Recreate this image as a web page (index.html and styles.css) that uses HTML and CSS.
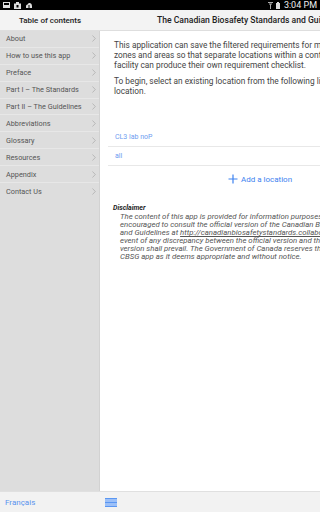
FILE: index.html
```html
<!DOCTYPE html>
<html>
<head>
<meta charset="utf-8">
<link rel="stylesheet" href="styles.css">
</head>
<body>
<div class="screen">
  <div class="status">
    <div class="status-left">
      <svg width="7" height="6" viewBox="0 0 7 6"><rect x="0.5" y="0.5" width="6" height="5" fill="none" stroke="#ddd" stroke-width="1"/><rect x="1" y="3" width="5" height="2" fill="#ddd"/></svg>
      <svg width="7" height="7" viewBox="0 0 7 7"><rect x="0" y="1.5" width="7" height="5.5" fill="#ddd"/><rect x="2" y="0" width="3" height="2" fill="#ddd"/><rect x="2.5" y="3" width="2" height="2.5" fill="#000"/></svg>
      <svg width="8" height="6" viewBox="0 0 8 6"><path d="M1 6 L1 4 Q1 2.5 2.5 2.5 Q3 0.5 5 1 Q7 1.5 7 4 L7 6 Z" fill="#ddd"/><rect x="3.5" y="3" width="1" height="3" fill="#000"/></svg>
    </div>
    <div class="status-right">
      <svg width="5" height="7" viewBox="0 0 5 7"><path d="M0 0.5 H5 M1 2 H4 M2.5 2 V7" stroke="#aaa" stroke-width="1" fill="none"/></svg>
      <svg width="4" height="7" viewBox="0 0 4 7"><rect x="1" y="0" width="2" height="1" fill="#ddd"/><rect x="0" y="1" width="4" height="6" fill="#ddd"/></svg>
      <span class="clock">3:04 PM</span>
    </div>
  </div>

  <div class="header">
    <div class="header-left">Table of contents</div>
    <div class="header-right">The Canadian Biosafety Standards and Guidelines</div>
  </div>

  <div class="main">
    <nav class="sidebar">
      <div class="item"><span>About</span><svg class="chev" width="4" height="7" viewBox="0 0 4 7"><path d="M0.5 0.5 L3.3 3.5 L0.5 6.5" fill="none" stroke="#b3b3b3" stroke-width="0.9"/></svg></div>
      <div class="item"><span>How to use this app</span><svg class="chev" width="4" height="7" viewBox="0 0 4 7"><path d="M0.5 0.5 L3.3 3.5 L0.5 6.5" fill="none" stroke="#b3b3b3" stroke-width="0.9"/></svg></div>
      <div class="item"><span>Preface</span><svg class="chev" width="4" height="7" viewBox="0 0 4 7"><path d="M0.5 0.5 L3.3 3.5 L0.5 6.5" fill="none" stroke="#b3b3b3" stroke-width="0.9"/></svg></div>
      <div class="item"><span>Part I – The Standards</span><svg class="chev" width="4" height="7" viewBox="0 0 4 7"><path d="M0.5 0.5 L3.3 3.5 L0.5 6.5" fill="none" stroke="#b3b3b3" stroke-width="0.9"/></svg></div>
      <div class="item"><span>Part II – The Guidelines</span><svg class="chev" width="4" height="7" viewBox="0 0 4 7"><path d="M0.5 0.5 L3.3 3.5 L0.5 6.5" fill="none" stroke="#b3b3b3" stroke-width="0.9"/></svg></div>
      <div class="item"><span>Abbreviations</span><svg class="chev" width="4" height="7" viewBox="0 0 4 7"><path d="M0.5 0.5 L3.3 3.5 L0.5 6.5" fill="none" stroke="#b3b3b3" stroke-width="0.9"/></svg></div>
      <div class="item"><span>Glossary</span><svg class="chev" width="4" height="7" viewBox="0 0 4 7"><path d="M0.5 0.5 L3.3 3.5 L0.5 6.5" fill="none" stroke="#b3b3b3" stroke-width="0.9"/></svg></div>
      <div class="item"><span>Resources</span><svg class="chev" width="4" height="7" viewBox="0 0 4 7"><path d="M0.5 0.5 L3.3 3.5 L0.5 6.5" fill="none" stroke="#b3b3b3" stroke-width="0.9"/></svg></div>
      <div class="item"><span>Appendix</span><svg class="chev" width="4" height="7" viewBox="0 0 4 7"><path d="M0.5 0.5 L3.3 3.5 L0.5 6.5" fill="none" stroke="#b3b3b3" stroke-width="0.9"/></svg></div>
      <div class="item"><span>Contact Us</span><svg class="chev" width="4" height="7" viewBox="0 0 4 7"><path d="M0.5 0.5 L3.3 3.5 L0.5 6.5" fill="none" stroke="#b3b3b3" stroke-width="0.9"/></svg></div>
    </nav>
    <section class="content">
      <div class="inner">
        <p class="intro">This application can save the filtered requirements for multiple<br>zones and areas so that separate locations within a containment<br>facility can produce their own requirement checklist.</p>
        <p class="intro">To begin, select an existing location from the following list or add a new<br>location.</p>

        <ul class="locations">
          <li>CL3 lab noP</li>
          <li>all</li>
        </ul>

        <div class="add-row">
          <span class="add">
            <svg width="10" height="10" viewBox="0 0 10 10"><path d="M5 0.5 V9.5 M0.5 5 H9.5" stroke="#3c82f0" stroke-width="1.2" fill="none"/></svg>
            Add a location
          </span>
        </div>

        <div class="disclaimer">
          <div class="disc-title">Disclaimer</div>
          <p class="disc-text">The content of this app is provided for information purposes only. Users are<br>encouraged to consult the official version of the Canadian Biosafety Standards<br>and Guidelines at <u>http://canadianbiosafetystandards.collaboration.gc.ca</u>. In the<br>event of any discrepancy between the official version and the app, the official<br>version shall prevail. The Government of Canada reserves the right to modify the<br>CBSG app as it deems appropriate and without notice.</p>
        </div>
      </div>
    </section>
  </div>

  <div class="footer">
    <div class="footer-left">Français</div>
    <div class="footer-right">
      <svg width="12" height="9" viewBox="0 0 12 9"><rect x="0" y="0" width="12" height="9" fill="#9cc0f8"/><rect x="0" y="0" width="12" height="1" fill="#5b97f2"/><rect x="0" y="4" width="12" height="1" fill="#5b97f2"/><rect x="0" y="8" width="12" height="1" fill="#5b97f2"/></svg>
    </div>
  </div>
</div>
</body>
</html>
```

FILE: styles.css
```css
* { box-sizing: border-box; }
html, body {
  margin: 0;
  padding: 0;
  width: 320px;
  height: 512px;
  overflow: hidden;
  font-family: Roboto, "Liberation Sans", sans-serif;
}
.screen {
  width: 320px;
  height: 512px;
  display: flex;
  flex-direction: column;
  background: #fff;
}
.status {
  height: 10px;
  background: #000;
  display: flex;
  justify-content: space-between;
  align-items: center;
  padding: 0 3px;
  flex: none;
}
.status-left, .status-right {
  display: flex;
  align-items: center;
  gap: 4px;
}
.status-right { gap: 3px; }
.clock {
  color: #eee;
  font-size: 9px;
  line-height: 10px;
  margin-left: 1px;
}
.header {
  height: 21px;
  flex: none;
  background: #f3f3f3;
  border-bottom: 1px solid #dedede;
  display: flex;
  align-items: center;
  font-size: 8px;
  font-weight: 500;
  color: #222;
}
.header-left {
  width: 100px;
  text-align: center;
  flex: none;
}
.header-right {
  flex: 1;
  white-space: nowrap;
  overflow: hidden;
  padding-left: 57px;
  font-size: 8.6px;
}
.main {
  flex: 1;
  display: flex;
  min-height: 0;
}
.sidebar {
  width: 100px;
  flex: none;
  background: #dddddd;
  border-right: 1px solid #d2d2d2;
}
.item {
  height: 16.9px;
  display: flex;
  align-items: center;
  justify-content: space-between;
  padding: 0 3px 0 6px;
  font-size: 7.3px;
  color: #555;
  border-bottom: 1px solid #e7e7e7;
}
.item:last-child { border-bottom: none; }
.chev { flex: none; }
.content {
  flex: 1;
  overflow: hidden;
  background: #fff;
}
.inner {
  width: 330px;
  padding-top: 9px;
}
.intro {
  margin: 0 0 6px 14px;
  font-size: 8.3px;
  line-height: 10px;
  color: #444;
  white-space: nowrap;
}
.locations {
  list-style: none;
  margin: 32px 0 0 8px;
  padding: 0;
  width: 312px;
}
.locations li {
  height: 19px;
  line-height: 18px;
  padding-left: 7px;
  font-size: 7px;
  color: #6d9df0;
  border-bottom: 1px solid #e8e8e8;
}
.add-row {
  width: 320px;
  height: 26px;
  display: flex;
  justify-content: center;
  align-items: center;
}
.add {
  display: flex;
  align-items: center;
  gap: 3px;
  color: #3c82f0;
  font-size: 8px;
}
.disclaimer {
  margin-left: 13px;
  padding-top: 12px;
}
.disc-title {
  font-size: 7px;
  line-height: 8px;
  font-weight: bold;
  font-style: italic;
  color: #222;
}
.disc-text {
  margin: 1px 0 0 7px;
  font-size: 7.8px;
  line-height: 8.1px;
  font-style: italic;
  color: #555;
  white-space: nowrap;
}
.footer {
  height: 21px;
  flex: none;
  background: #f2f2f2;
  border-top: 1px solid #e0e0e0;
  display: flex;
  align-items: center;
}
.footer-left {
  width: 100px;
  padding-left: 5px;
  font-size: 8px;
  color: #5a93ee;
}
.footer-right {
  padding-left: 5px;
  display: flex;
  align-items: center;
}
```
